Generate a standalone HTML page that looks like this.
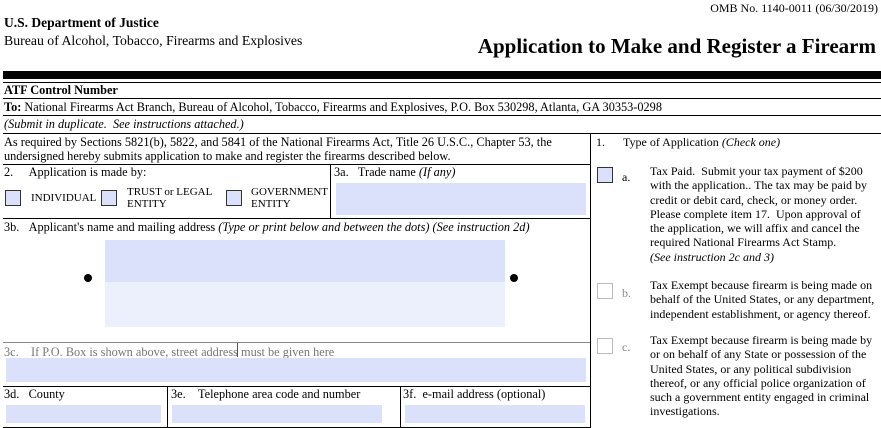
<!DOCTYPE html><html><head><style>
body{margin:0;width:881px;height:428px;background:#fff;position:relative;overflow:hidden;font-family:"Liberation Serif",serif;font-size:12.3px;color:#000}
.a{position:absolute;white-space:nowrap;line-height:13px}
.h{position:absolute;background:#000;height:1px}
.v{position:absolute;background:#000;width:1px}
.b{position:absolute;background:#dbe1fb}
.cb{position:absolute;width:14px;height:14px;border:1px solid #333;background:#dbe1fb}
i{font-style:italic}
.r{font-size:12px}
</style></head><body>
<div class="a" style="right:3px;top:2px;font-size:12px">OMB No. 1140-0011 (06/30/2019)</div>
<div class="a" style="left:4px;top:16px;font-weight:bold;font-size:13.5px">U.S. Department of Justice</div>
<div class="a" style="left:4px;top:34px;font-size:13.8px">Bureau of Alcohol, Tobacco, Firearms and Explosives</div>
<div class="a" style="right:5px;top:35px;font-weight:bold;font-size:21px;line-height:22px">Application to Make and Register a Firearm</div>
<div class="h" style="left:3px;width:878px;top:71px;height:8px"></div>
<div class="h" style="left:3px;width:878px;top:82px"></div>
<div class="a" style="left:4px;top:84px;font-weight:bold">ATF Control Number</div>
<div class="h" style="left:3px;width:878px;top:98px"></div>
<div class="a" style="left:4px;top:101px"><b>To:</b> National Firearms Act Branch, Bureau of Alcohol, Tobacco, Firearms and Explosives, P.O. Box 530298, Atlanta, GA 30353-0298</div>
<div class="h" style="left:3px;width:878px;top:115px"></div>
<div class="a" style="left:4px;top:118px"><i>(Submit in duplicate.&nbsp; See instructions attached.)</i></div>
<div class="h" style="left:3px;width:878px;top:133px"></div>
<div class="a" style="left:4px;top:135px;line-height:14px">As required by Sections 5821(b), 5822, and 5841 of the National Firearms Act, Title 26 U.S.C., Chapter 53, the<br>undersigned hereby submits application to make and register the firearms described below.</div>
<div class="v" style="left:590px;top:133px;height:295px"></div>
<div class="h" style="left:3px;width:587px;top:164px"></div>
<div class="a" style="left:4px;top:166px">2.&nbsp;&nbsp;&nbsp;&nbsp;&nbsp;Application is made by:</div>
<div class="cb" style="left:5px;top:190px"></div>
<div class="a" style="left:31px;top:192px;font-size:11px">INDIVIDUAL</div>
<div class="cb" style="left:101px;top:190px"></div>
<div class="a" style="left:127px;top:186px;font-size:11px;line-height:12px">TRUST or LEGAL<br>ENTITY</div>
<div class="cb" style="left:226px;top:190px"></div>
<div class="a" style="left:251px;top:186px;font-size:11px;line-height:12px">GOVERNMENT<br>ENTITY</div>
<div class="v" style="left:330px;top:164px;height:55px"></div>
<div class="a" style="left:334px;top:166px">3a.&nbsp;&nbsp;&nbsp;Trade name <i>(If any)</i></div>
<div class="b" style="left:336px;top:183px;width:250px;height:32px"></div>
<div class="h" style="left:3px;width:587px;top:218px"></div>
<div class="a" style="left:4px;top:221px">3b.&nbsp;&nbsp;&nbsp;Applicant's name and mailing address <i>(Type or print below and between the dots) (See instruction 2d)</i></div>
<div class="b" style="left:105px;top:240px;width:400px;height:42px"></div>
<div class="b" style="left:105px;top:282px;width:400px;height:45px;background:#eceffc"></div>
<div style="position:absolute;left:84px;top:274px;width:8px;height:8px;border-radius:50%;background:#000"></div>
<div style="position:absolute;left:510px;top:274px;width:8px;height:8px;border-radius:50%;background:#000"></div>
<div class="h" style="left:3px;width:587px;top:342px;background:#888"></div>
<div class="a" style="left:4px;top:346px;color:#777">3c.&nbsp;&nbsp;&nbsp;&nbsp;If P.O. Box is shown above, street address must be given here</div>
<div class="v" style="left:237px;top:343px;height:14px;background:#555"></div>
<div class="b" style="left:6px;top:358px;width:580px;height:24px"></div>
<div class="h" style="left:3px;width:587px;top:386px"></div>
<div class="a" style="left:4px;top:388px">3d.&nbsp;&nbsp;&nbsp;County</div>
<div class="v" style="left:167px;top:386px;height:42px"></div>
<div class="a" style="left:171px;top:388px">3e.&nbsp;&nbsp;&nbsp;&nbsp;Telephone area code and number</div>
<div class="v" style="left:400px;top:386px;height:42px"></div>
<div class="a" style="left:403px;top:388px">3f.&nbsp; e-mail address (optional)</div>
<div class="b" style="left:6px;top:405px;width:155px;height:18px"></div>
<div class="b" style="left:172px;top:405px;width:210px;height:18px"></div>
<div class="b" style="left:405px;top:405px;width:180px;height:18px"></div>
<div class="h" style="left:3px;width:587px;top:427px"></div>
<div class="a r" style="left:596px;top:136px">1.&nbsp;&nbsp;&nbsp;&nbsp;&nbsp;&nbsp;Type of Application <i>(Check one)</i></div>
<div class="cb" style="left:597px;top:167px"></div>
<div class="a r" style="left:622px;top:171px">a.</div>
<div class="a r" style="left:650px;top:164px;line-height:14.3px">Tax Paid.&nbsp; Submit your tax payment of $200<br>with the application.. The tax may be paid by<br>credit or debit card, check, or money order.<br>Please complete item 17.&nbsp; Upon approval of<br>the application, we will affix and cancel the<br>required National Firearms Act Stamp.<br><i>(See instruction 2c and 3)</i></div>
<div class="cb" style="left:597px;top:283px;border-color:#bbb;background:#fff"></div>
<div class="a r" style="left:622px;top:287px;color:#888">b.</div>
<div class="a r" style="left:650px;top:278px;line-height:14.3px">Tax Exempt because firearm is being made on<br>behalf of the United States, or any department,<br>independent establishment, or agency thereof.</div>
<div class="cb" style="left:597px;top:338px;border-color:#bbb;background:#fff"></div>
<div class="a r" style="left:622px;top:341px;color:#888">c.</div>
<div class="a r" style="left:650px;top:333px;line-height:14.3px">Tax Exempt because firearm is being made by<br>or on behalf of any State or possession of the<br>United States, or any political subdivision<br>thereof, or any official police organization of<br>such a government entity engaged in criminal<br>investigations.</div>
</body></html>
